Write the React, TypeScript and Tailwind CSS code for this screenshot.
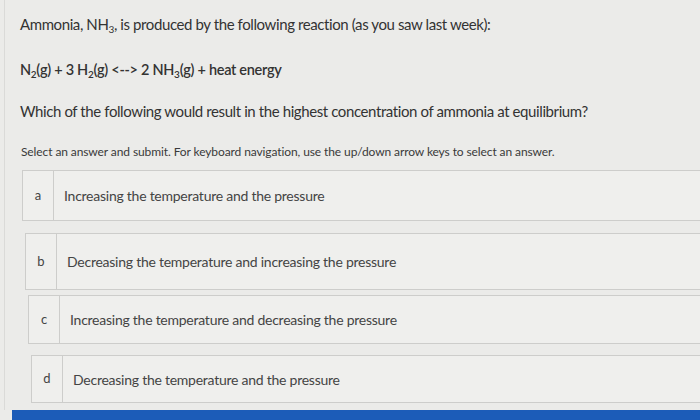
const options = [
  { key: "a", text: "Increasing the temperature and the pressure", ml: "ml-[17px]", h: "h-[51px]", mt: "mt-[10px]" },
  { key: "b", text: "Decreasing the temperature and increasing the pressure", ml: "ml-[20px]", h: "h-[57px]", mt: "mt-[12px]" },
  { key: "c", text: "Increasing the temperature and decreasing the pressure", ml: "ml-[23px]", h: "h-[49px]", mt: "mt-[5px]" },
  { key: "d", text: "Decreasing the temperature and the pressure", ml: "ml-[26px]", h: "h-[48px]", mt: "mt-[11px]" },
];

export default function App() {
  return (
    <div
      className="w-[700px] h-[420px] overflow-hidden bg-[#ebebe9] flex flex-col"
      style={{ fontFamily: "Lato, 'Noto Sans', sans-serif" }}
    >
      <div className="flex-1 ml-[4px] border-l border-[#dadad8] flex flex-col text-[#333333] overflow-hidden">
        <p className="ml-[15px] mt-[14px] h-[20px] text-[15px] leading-[20px] tracking-[-0.4px] whitespace-nowrap">
          Ammonia, NH<sub className="text-[10px]">3</sub>, is produced by the following reaction (as you saw last week):
        </p>
        <p className="ml-[15px] mt-[26px] h-[20px] text-[14.5px] leading-[20px] tracking-[-0.3px] font-semibold whitespace-nowrap">
          N<sub className="text-[10px]">2</sub>(g) + 3 H<sub className="text-[10px]">2</sub>(g) &lt;--&gt; 2 NH
          <sub className="text-[10px]">3</sub>(g) + heat energy
        </p>
        <p className="ml-[15px] mt-[21px] h-[20px] text-[15px] leading-[20px] tracking-[-0.4px] whitespace-nowrap">
          Which of the following would result in the highest concentration of ammonia at equilibrium?
        </p>
        <p className="ml-[16px] mt-[23px] h-[16px] text-[12px] leading-[16px] tracking-[-0.1px] text-[#3a3a3a] whitespace-nowrap">
          Select an answer and submit. For keyboard navigation, use the up/down arrow keys to select an answer.
        </p>
        {options.map((o) => (
          <div
            key={o.key}
            className={`${o.ml} ${o.h} ${o.mt} w-[720px] shrink-0 flex border border-[#cdcdcb] bg-[#efefed]`}
          >
            <div className="w-[31px] border-r border-[#cdcdcb] flex items-center justify-center text-[13px] text-[#444444]">
              {o.key}
            </div>
            <div className="pl-[10px] flex items-center text-[14px] tracking-[-0.25px] text-[#444444]">{o.text}</div>
          </div>
        ))}
      </div>
      <div className="h-[10px] ml-[12px] bg-[#1c5cb8] shrink-0" />
    </div>
  );
}
